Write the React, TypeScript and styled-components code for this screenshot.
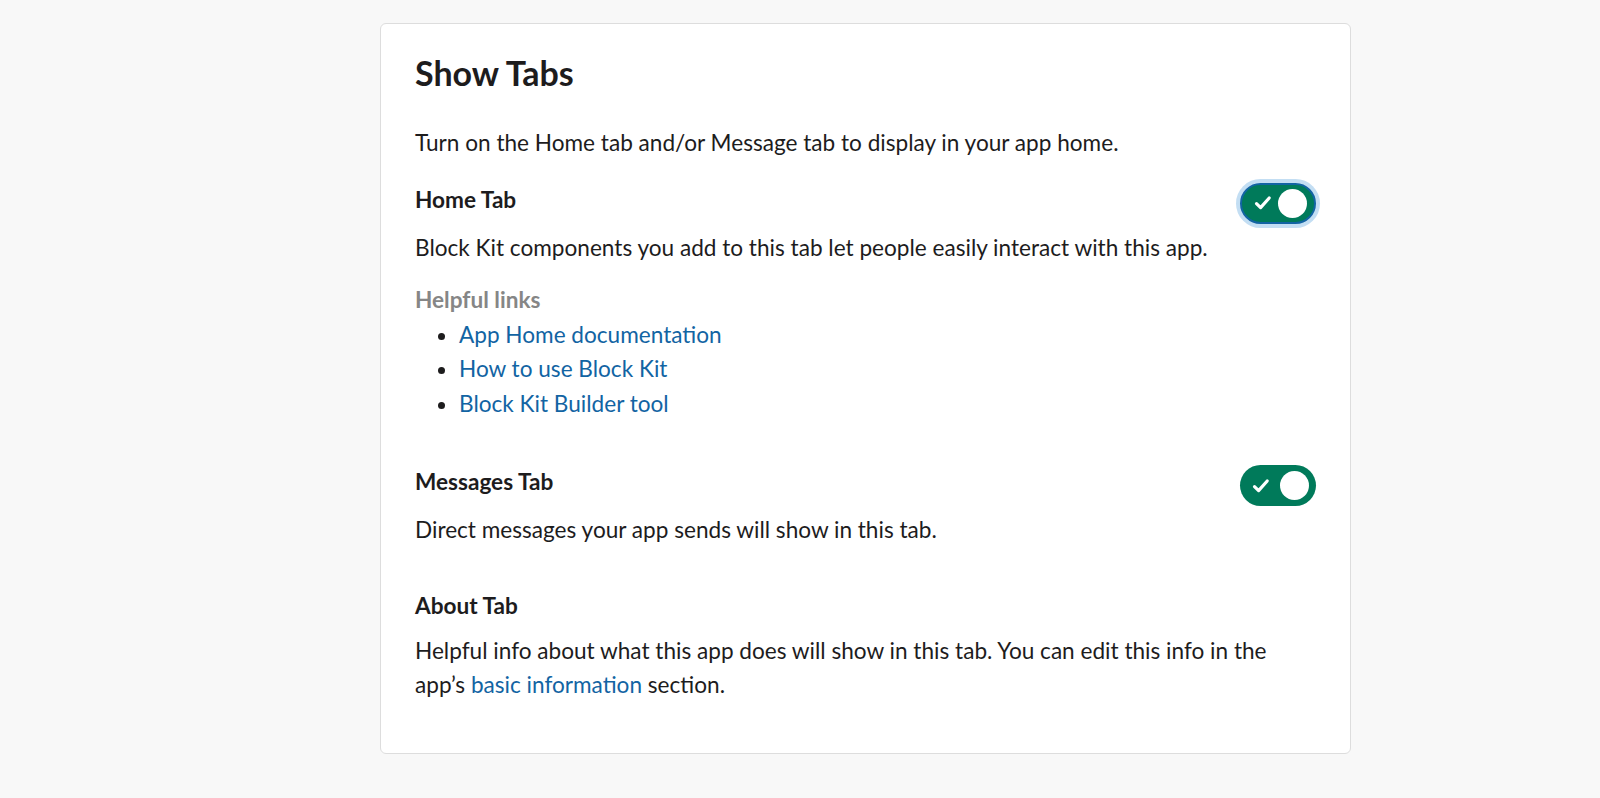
import React from "react";
import styled, { createGlobalStyle } from "styled-components";

const GlobalStyle = createGlobalStyle`
  html, body {
    margin: 0;
    padding: 0;
    background: #f8f8f8;
  }
  body {
    font-family: Lato, "Noto Sans", "Liberation Sans", sans-serif;
    color: #1d1c1d;
    -webkit-font-smoothing: antialiased;
  }
`;

const Page = styled.div`
  min-height: 798px;
  padding-top: 23px;
  box-sizing: border-box;
`;

const Card = styled.section`
  width: 971px;
  margin-left: 380px;
  box-sizing: border-box;
  padding: 30px 34px 50px;
  background: #ffffff;
  border: 1px solid #dddddd;
  border-radius: 6px;
  font-size: 22.6px;
  line-height: 34.5px;
`;

const Title = styled.h2`
  margin: 0 0 34px;
  font-size: 34px;
  line-height: 38.4px;
  font-weight: 700;
`;

const Text = styled.p<{ $top?: number }>`
  margin: ${(p) => p.$top ?? 0}px 0 0;
`;

const Section = styled.div`
  margin-top: 41px;
`;

const FirstSection = styled(Section)`
  margin-top: 22px;
`;

const SectionHead = styled.div`
  display: flex;
  justify-content: space-between;
  align-items: flex-start;
  min-height: 38px;
`;

const SectionName = styled.h3`
  margin: 0;
  font-size: 22.6px;
  line-height: 34.5px;
  font-weight: 700;
`;

const LinksLabel = styled.div`
  margin-top: 18px;
  color: #868686;
  font-weight: 700;
`;

const LinkList = styled.ul`
  margin: 0;
  padding: 0 0 3px 44px;
  list-style: disc;
`;

const Link = styled.a`
  color: #1264a3;
  text-decoration: none;
  cursor: pointer;
`;

const Track = styled.button<{ $focused?: boolean }>`
  position: relative;
  flex: none;
  width: 76px;
  height: 41px;
  padding: 0;
  border-radius: 21px;
  background: #007a5a;
  cursor: pointer;
  box-sizing: border-box;
  border: ${(p) => (p.$focused ? "2px solid #1264a3" : "none")};
  box-shadow: ${(p) => (p.$focused ? "0 0 0 4px #c3def3" : "none")};
`;

const Knob = styled.span`
  position: absolute;
  top: 50%;
  right: 7px;
  width: 29px;
  height: 29px;
  margin-top: -14.5px;
  border-radius: 50%;
  background: #ffffff;
`;

const Check = styled.svg`
  position: absolute;
  left: 12px;
  top: 50%;
  margin-top: -8px;
`;

const Toggle = ({ focused }: { focused?: boolean }) => (
  <Track $focused={focused} aria-pressed="true">
    <Check width="18" height="16" viewBox="0 0 18 16">
      <path
        d="M2.5 8.6 L6.6 12.6 L15.2 3"
        fill="none"
        stroke="#ffffff"
        strokeWidth="3.2"
        strokeLinecap="round"
        strokeLinejoin="round"
      />
    </Check>
    <Knob />
  </Track>
);

export default function App() {
  return (
    <>
      <GlobalStyle />
      <Page>
        <Card>
          <Title>Show Tabs</Title>
          <Text>
            Turn on the Home tab and/or Message tab to display in your app home.
          </Text>

          <FirstSection>
            <SectionHead>
              <SectionName>Home Tab</SectionName>
              <Toggle focused />
            </SectionHead>
            <Text $top={7}>
              Block Kit components you add to this tab let people easily
              interact with this app.
            </Text>
            <LinksLabel>Helpful links</LinksLabel>
            <LinkList>
              <li>
                <Link>App Home documentation</Link>
              </li>
              <li>
                <Link>How to use Block Kit</Link>
              </li>
              <li>
                <Link>Block Kit Builder tool</Link>
              </li>
            </LinkList>
          </FirstSection>

          <Section>
            <SectionHead>
              <SectionName>Messages Tab</SectionName>
              <Toggle />
            </SectionHead>
            <Text $top={7}>Direct messages your app sends will show in this tab.</Text>
          </Section>

          <Section>
            <SectionHead>
              <SectionName>About Tab</SectionName>
            </SectionHead>
            <Text $top={7}>
              Helpful info about what this app does will show in this tab. You
              can edit this info in the app’s <Link>basic information</Link>{" "}
              section.
            </Text>
          </Section>
        </Card>
      </Page>
    </>
  );
}
